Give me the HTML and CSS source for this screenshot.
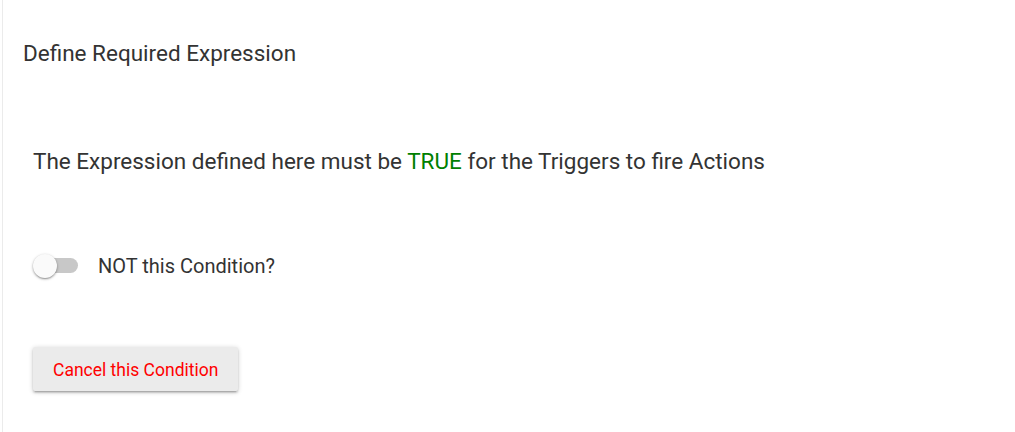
FILE: index.html
```html
<!DOCTYPE html>
<html lang="en">
<head>
<meta charset="utf-8">
<title>Define Required Expression</title>
<link rel="stylesheet" href="styles.css">
</head>
<body>
<div class="panel">
  <h2 class="title">Define Required Expression</h2>
  <div class="content">
    <p class="lead">The Expression defined here must be <span class="true">TRUE</span> for the Triggers to fire Actions</p>
    <label class="switch-row">
      <span class="switch"><span class="track"></span><span class="thumb"></span></span>
      <span class="switch-label">NOT this Condition?</span>
    </label>
    <button class="cancel" type="button">Cancel this Condition</button>
  </div>
</div>
</body>
</html>
```
FILE: styles.css
```css
html, body {
  margin: 0;
  padding: 0;
  background: #fff;
}
body {
  font-family: Roboto, "Liberation Sans", sans-serif;
  color: #333;
}
.panel {
  margin-left: 2px;
  border-left: 1px solid #ebebeb;
  padding: 39px 0 0 20px;
  min-height: 432px;
  box-sizing: border-box;
}
.title {
  margin: 0;
  font-size: 22.5px;
  line-height: 28px;
  font-weight: 400;
}
.content {
  padding-left: 10px;
  margin-top: 80px;
}
.lead {
  margin: 0;
  font-size: 22.5px;
  line-height: 28px;
}
.true {
  color: #008000;
}
.switch-row {
  display: flex;
  align-items: center;
  height: 38px;
  margin-top: 72px;
  gap: 20px;
}
.switch {
  position: relative;
  width: 45px;
  height: 38px;
  flex: none;
}
.track {
  position: absolute;
  left: 7px;
  top: 11px;
  width: 38px;
  height: 15px;
  border-radius: 8px;
  background: #c8c8c8;
}
.thumb {
  position: absolute;
  left: 0;
  top: 7px;
  width: 24px;
  height: 24px;
  border-radius: 50%;
  background: #fafafa;
  box-shadow: 0 1px 3px rgba(0,0,0,0.25), 0 1px 2px rgba(0,0,0,0.18), 0 2px 1px -1px rgba(0,0,0,0.12);
}
.switch-label {
  font-size: 20px;
  line-height: 24px;
}
.cancel {
  display: block;
  margin-top: 62px;
  height: 44px;
  padding: 1px 20px 0;
  border: none;
  border-radius: 2px;
  background: #ebebeb;
  color: #ff0000;
  font-family: Roboto, "Liberation Sans", sans-serif;
  font-size: 17.5px;
  box-shadow: 0 1px 5px rgba(0,0,0,0.2), 0 2px 2px rgba(0,0,0,0.14), 0 3px 1px -2px rgba(0,0,0,0.12);
}
```
